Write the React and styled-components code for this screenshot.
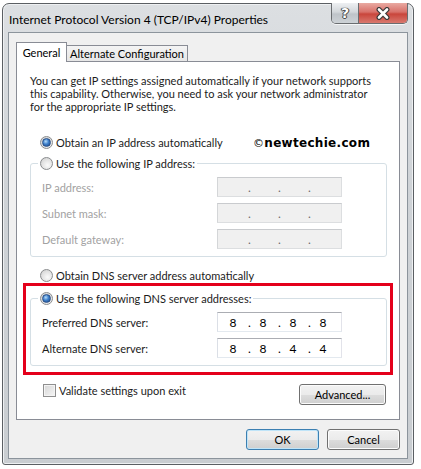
import React from 'react';
import styled, { createGlobalStyle, css } from 'styled-components';

const GlobalStyle = createGlobalStyle`
  body {
    margin: 0;
    background: #ffffff;
    font-family: Lato, "Liberation Sans", sans-serif;
    font-size: 11px;
    color: #1b1b1b;
  }
  * { box-sizing: border-box; }
`;

const Page = styled.div`
  padding: 3px 0 0 2px;
`;

const Window = styled.div`
  width: 412px;
  height: 462px;
  display: flex;
  flex-direction: column;
  border: 1px solid #5b5f63;
  border-radius: 7px 7px 3px 3px;
  background: linear-gradient(#dcdfe2, #cfd3d7 40%, #c9cdd1);
  box-shadow: inset 0 0 0 1px #eef0f2;
`;

const TitleBar = styled.div`
  height: 28px;
  display: flex;
  align-items: flex-start;
  justify-content: space-between;
  padding: 0 5px 0 6px;
`;

const Title = styled.div`
  font-size: 12px;
  line-height: 15px;
  padding-top: 8px;
  color: #000;
`;

const CaptionGroup = styled.div`
  display: flex;
  margin-top: -1px;
  border: 1px solid #6a6d70;
  border-top: none;
  border-radius: 0 0 5px 5px;
  overflow: hidden;
  box-shadow: 0 1px 0 rgba(255, 255, 255, 0.7);
`;

const CaptionButton = styled.div`
  height: 20px;
  display: flex;
  align-items: center;
  justify-content: center;
  font: bold 14px "DejaVu Sans", sans-serif;
  color: #fff;
  text-shadow: 0 0 1px #333, 0 0 1px #333, 1px 0 0 #555, -1px 0 0 #555, 0 1px 0 #555;
  ${p => p.$close ? css`
    width: 48px;
    background: linear-gradient(#e9aaa2, #d8716a 45%, #c9463c 55%, #d9786e);
  ` : css`
    width: 27px;
    border-right: 1px solid #6a6d70;
    background: linear-gradient(#eef0f2, #d3d7db 45%, #bfc4c9 55%, #cdd2d6);
  `}
`;

const Client = styled.div`
  flex: 1;
  margin: 0 5px 5px 5px;
  border: 1px solid #8c949c;
  background: #f0f0f0;
  padding: 9px 7px 0 7px;
  display: flex;
  flex-direction: column;
`;

const TabStrip = styled.div`
  height: 19px;
  display: flex;
  align-items: flex-end;
`;

const Tab = styled.div`
  display: flex;
  align-items: center;
  justify-content: center;
  border: 1px solid #898c95;
  border-bottom: none;
  color: #000;
  ${p => p.$active ? css`
    position: relative;
    z-index: 1;
    width: 51px;
    height: 20px;
    margin-bottom: -1px;
    background: #fff;
  ` : css`
    width: 121px;
    height: 16px;
    border-left: none;
    background: linear-gradient(#f4f4f4, #e6e6e6);
  `}
`;

const Panel = styled.div`
  width: 384px;
  height: 359px;
  border: 1px solid #898c95;
  background: #fff;
  padding-top: 12px;
  display: flex;
  flex-direction: column;
`;

const Intro = styled.p`
  margin: 0 0 0 13px;
  line-height: 13px;
  color: #1b1b1b;
`;

const TopRow = styled.div`
  display: flex;
  align-items: flex-start;
  margin: 23px 24px 0 23px;
  height: 21px;
`;

const Option = styled.label`
  display: flex;
  align-items: center;
  gap: 3px;
  line-height: 13px;
  color: #1b1b1b;
  ${p => p.$indent && css`
    margin-left: ${p.$indent}px;
  `}
  ${p => p.$top && css`
    margin-top: ${p.$top}px;
  `}
`;

const Radio = styled.span`
  width: 13px;
  height: 13px;
  border-radius: 50%;
  border: 1px solid #8a8c8e;
  background: radial-gradient(circle at 60% 65%, #fbfbfb, #e2e2e2 55%, #c9c9c9);
  display: grid;
  place-items: center;
  &::after {
    content: '';
    width: 7px;
    height: 7px;
    border-radius: 50%;
    display: ${p => (p.$checked ? 'block' : 'none')};
    background: radial-gradient(circle at 40% 35%, #b5dcfa, #3d7fcb 45%, #1c4583);
    border: 1px solid #2a4f86;
  }
`;

const Watermark = styled.div`
  margin-left: auto;
  width: 124px;
  height: 21px;
  line-height: 22px;
  padding-left: 2px;
  background: #fff;
  font: bold 12px "DejaVu Sans", Verdana, sans-serif;
  letter-spacing: 0.3px;
  color: #000;
  span {
    font-weight: normal;
    font-size: 11px;
  }
`;

const Group = styled.fieldset`
  margin: 0 0 0 ${p => p.$left}px;
  ${p => p.$top && css`margin-top: ${p.$top}px;`}
  width: 357px;
  min-width: 0;
  border: 1px solid #d5dfe5;
  border-radius: 3px;
  padding: 7px 0 7px 7px;
`;

const Legend = styled.legend`
  padding: 0 2px;
  line-height: 13px;
  display: flex;
  align-items: center;
  gap: 3px;
  color: #1b1b1b;
`;

const Fields = styled.div`
  display: grid;
  grid-template-columns: 175px 125px;
  row-gap: 6px;
  align-items: center;
  padding-left: 4px;
`;

const FieldLabel = styled.span`
  color: ${p => (p.$disabled ? '#a2a2a2' : '#1b1b1b')};
`;

const IpBox = styled.div`
  height: 20px;
  display: flex;
  align-items: center;
  padding-left: 4px;
  font-size: 12px;
  border: 1px solid;
  ${p => p.$disabled ? css`
    background: #f0f0f0;
    border-color: #c9cbce #dcdee0 #dcdee0 #d4d6d8;
    color: #6d6d6d;
  ` : css`
    background: #fff;
    border-color: #abadb3 #e2e3ea #e3e9ef #dbdfe6;
    color: #000;
  `}
`;

const Octet = styled.span`
  width: 22px;
  text-align: center;
`;

const Dot = styled.span`
  width: 8px;
  padding-left: 4px;
`;

const RedMark = styled.div`
  margin: 1px 0 0 6px;
  width: 370px;
  border: 3px solid #e4001b;
  padding: 6px 3px 6px 4px;
`;

const FooterRow = styled.div`
  display: flex;
  align-items: flex-start;
  margin: 9px 13px 0 26px;
`;

const Checkbox = styled.span`
  width: 13px;
  height: 13px;
  border: 1px solid #8f8f8f;
  background: linear-gradient(135deg, #d6d6d6, #f6f6f6);
  box-shadow: inset 0 0 0 1px #f4f4f4;
`;

const Button = styled.button`
  width: ${p => p.$width || 73}px;
  height: 21px;
  margin-left: ${p => (p.$push ? 'auto' : '0')};
  font: 11px Lato, "Liberation Sans", sans-serif;
  color: #000;
  border-radius: 3px;
  border: 1px solid ${p => (p.$default ? '#3c7fb1' : '#707070')};
  background: linear-gradient(#f2f2f2, #ebebeb 50%, #dddddd 51%, #cfcfcf);
  box-shadow: inset 0 0 0 1px ${p => (p.$default ? '#bfe4f8' : '#fcfcfc')};
  padding: 0;
`;

const DialogButtons = styled.div`
  display: flex;
  justify-content: flex-end;
  gap: 8px;
  margin-top: 9px;
`;

function IpField({ value, disabled }) {
  const parts = value ? value.split('.') : ['', '', '', ''];
  return (
    <IpBox $disabled={disabled}>
      {parts.map((p, i) => (
        <React.Fragment key={i}>
          <Octet>{p}</Octet>
          {i < 3 && <Dot>.</Dot>}
        </React.Fragment>
      ))}
    </IpBox>
  );
}

function CloseGlyph() {
  return (
    <svg width="16" height="13" viewBox="0 0 16 13">
      <path d="M4 2.5 L12 10.5 M12 2.5 L4 10.5" stroke="#3a3a3a" strokeWidth="5" strokeLinecap="round" />
      <path d="M4 2.5 L12 10.5 M12 2.5 L4 10.5" stroke="#fff" strokeWidth="2.6" strokeLinecap="round" />
    </svg>
  );
}

export default function App() {
  return (
    <Page>
      <GlobalStyle />
      <Window>
        <TitleBar>
          <Title>Internet Protocol Version 4 (TCP/IPv4) Properties</Title>
          <CaptionGroup>
            <CaptionButton>?</CaptionButton>
            <CaptionButton $close><CloseGlyph /></CaptionButton>
          </CaptionGroup>
        </TitleBar>
        <Client>
          <TabStrip>
            <Tab $active>General</Tab>
            <Tab>Alternate Configuration</Tab>
          </TabStrip>
          <Panel>
            <Intro>
              You can get IP settings assigned automatically if your network supports<br />
              this capability. Otherwise, you need to ask your network administrator<br />
              for the appropriate IP settings.
            </Intro>
            <TopRow>
              <Option><Radio $checked />Obtain an IP address automatically</Option>
              <Watermark><span>©</span>newtechie.com</Watermark>
            </TopRow>
            <Group $left={13}>
              <Legend><Radio />Use the following IP address:</Legend>
              <Fields>
                <FieldLabel $disabled>IP address:</FieldLabel>
                <IpField disabled />
                <FieldLabel $disabled>Subnet mask:</FieldLabel>
                <IpField disabled />
                <FieldLabel $disabled>Default gateway:</FieldLabel>
                <IpField disabled />
              </Fields>
            </Group>
            <Option $indent={23} $top={12}><Radio />Obtain DNS server address automatically</Option>
            <RedMark>
              <Group $left={0}>
                <Legend><Radio $checked />Use the following DNS server addresses:</Legend>
                <Fields>
                  <FieldLabel>Preferred DNS server:</FieldLabel>
                  <IpField value="8.8.8.8" />
                  <FieldLabel>Alternate DNS server:</FieldLabel>
                  <IpField value="8.8.4.4" />
                </Fields>
              </Group>
            </RedMark>
            <FooterRow>
              <Option><Checkbox />Validate settings upon exit</Option>
              <Button $width={87} $push>Advanced...</Button>
            </FooterRow>
          </Panel>
          <DialogButtons>
            <Button $default>OK</Button>
            <Button>Cancel</Button>
          </DialogButtons>
        </Client>
      </Window>
    </Page>
  );
}
